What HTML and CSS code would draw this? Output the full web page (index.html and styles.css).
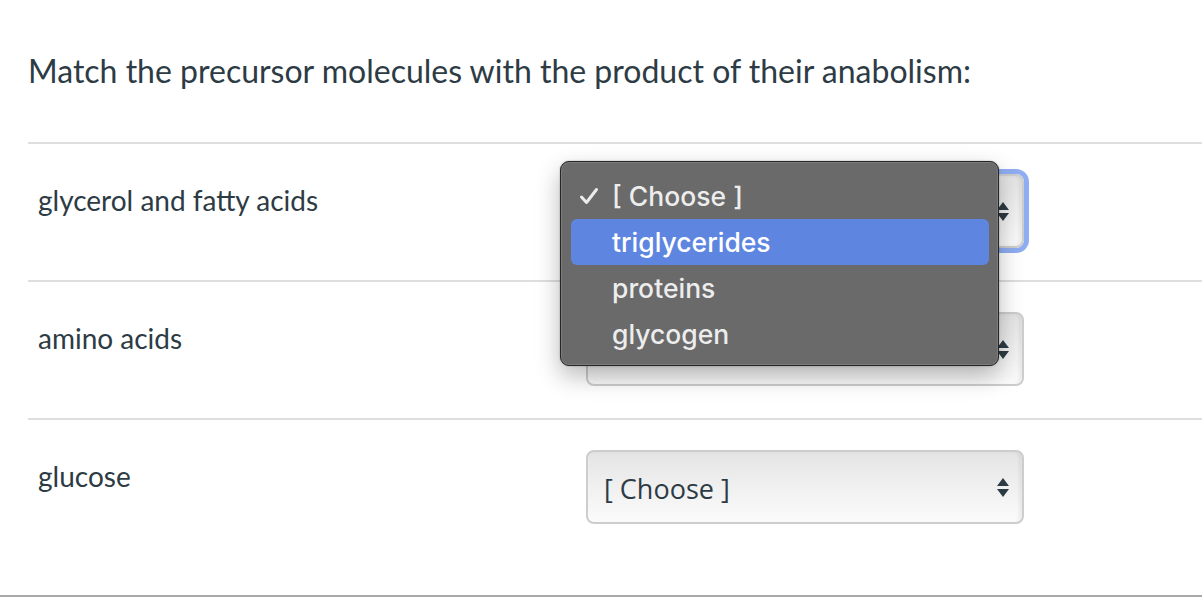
FILE: index.html
```html
<!DOCTYPE html>
<html lang="en">
<head>
<meta charset="utf-8">
<title>Matching question</title>
<link rel="stylesheet" href="styles.css">
</head>
<body>
<div class="page">
  <h1 class="question">Match the precursor molecules with the product of their anabolism:</h1>
  <div class="answers">
    <div class="row">
      <div class="label">glycerol and fatty acids</div>
      <div class="select-wrap">
        <div class="select focused">
          <span class="select-text">[ Choose ]</span>
          <span class="arrows"><span class="up"></span><span class="down"></span></span>
        </div>
        <div class="menu">
          <div class="item checked">
            <svg class="check" viewBox="0 0 20 18" width="20" height="18"><path d="M2.5 10 L7.5 15.5 L17.5 2.5" fill="none" stroke="#ececec" stroke-width="3" stroke-linecap="round" stroke-linejoin="round"/></svg>
            <span>[ Choose ]</span>
          </div>
          <div class="item active"><span>triglycerides</span></div>
          <div class="item"><span>proteins</span></div>
          <div class="item"><span>glycogen</span></div>
        </div>
      </div>
    </div>
    <div class="row">
      <div class="label">amino acids</div>
      <div class="select-wrap">
        <div class="select">
          <span class="select-text">[ Choose ]</span>
          <span class="arrows"><span class="up"></span><span class="down"></span></span>
        </div>
      </div>
    </div>
    <div class="row">
      <div class="label">glucose</div>
      <div class="select-wrap">
        <div class="select">
          <span class="select-text">[ Choose ]</span>
          <span class="arrows"><span class="up"></span><span class="down"></span></span>
        </div>
      </div>
    </div>
  </div>
</div>
<div class="bottom-rule"></div>
</body>
</html>
```

FILE: styles.css
```css
html, body {
  margin: 0;
  padding: 0;
  background: #ffffff;
}

body {
  font-family: Lato, "Noto Sans", sans-serif;
  color: #2d3b45;
  width: 1202px;
  height: 598px;
  overflow: hidden;
}

.page {
  padding-left: 28px;
  height: 595px;
}

.question {
  margin: 0;
  padding-top: 48px;
  height: 142px;
  box-sizing: border-box;
  font-size: 32px;
  font-weight: 400;
  line-height: 45px;
  color: #2d3b45;
}

.answers {
  display: flex;
  flex-direction: column;
}

.row {
  display: grid;
  grid-template-columns: 558px 438px;
  border-top: 2px solid #dedede;
  height: 138px;
  box-sizing: border-box;
}

.label {
  padding: 36px 0 0 10px;
  font-size: 28px;
  line-height: 40px;
  color: #2d3b45;
}

.select-wrap {
  position: relative;
  padding-top: 30px;
}

.select {
  display: flex;
  align-items: center;
  justify-content: space-between;
  height: 74px;
  box-sizing: border-box;
  border: 2px solid #cdcdcd;
  border-radius: 8px;
  background: linear-gradient(#e4e4e4 0%, #efefef 45%, #fbfbfb 100%);
  box-shadow: inset -3px 0 3px rgba(0,0,0,0.06), inset 0 -2px 2px rgba(255,255,255,0.8);
  padding: 0 13px 0 16px;
}

.select.focused {
  box-shadow: 0 0 0 5px #8fadf2, inset -3px 0 3px rgba(0,0,0,0.06);
}

.select-text {
  font-family: "Open Sans", "DejaVu Sans", sans-serif;
  font-size: 27px;
  color: #2d3b45;
  padding-top: 2px;
}

.arrows {
  display: flex;
  flex-direction: column;
  align-items: center;
  gap: 3px;
}

.up {
  width: 0;
  height: 0;
  border-left: 6px solid transparent;
  border-right: 6px solid transparent;
  border-bottom: 8px solid #2d3b45;
}

.down {
  width: 0;
  height: 0;
  border-left: 6px solid transparent;
  border-right: 6px solid transparent;
  border-top: 8px solid #2d3b45;
}

.menu {
  position: absolute;
  top: 17px;
  left: -26px;
  width: 439px;
  height: 205px;
  box-sizing: border-box;
  padding: 11px 9px 0 10px;
  background: #6a6a6a;
  border: 1px solid #262626;
  border-radius: 9px;
  box-shadow: inset 0 0 0 1px rgba(255,255,255,0.12), 0 10px 24px rgba(0,0,0,0.28), 0 0 2px rgba(0,0,0,0.3);
  font-family: Inter, "Noto Sans", sans-serif;
  font-size: 26.5px;
  font-weight: 500;
  color: #ededed;
  z-index: 5;
}

.item {
  position: relative;
  height: 46px;
  display: flex;
  align-items: center;
  padding-left: 41px;
  border-radius: 6px;
}

.item.active {
  background: #5e86e0;
  color: #ffffff;
}

.check {
  position: absolute;
  left: 8px;
  top: 14px;
}

.bottom-rule {
  height: 2px;
  background: #a9a9a9;
}
```
